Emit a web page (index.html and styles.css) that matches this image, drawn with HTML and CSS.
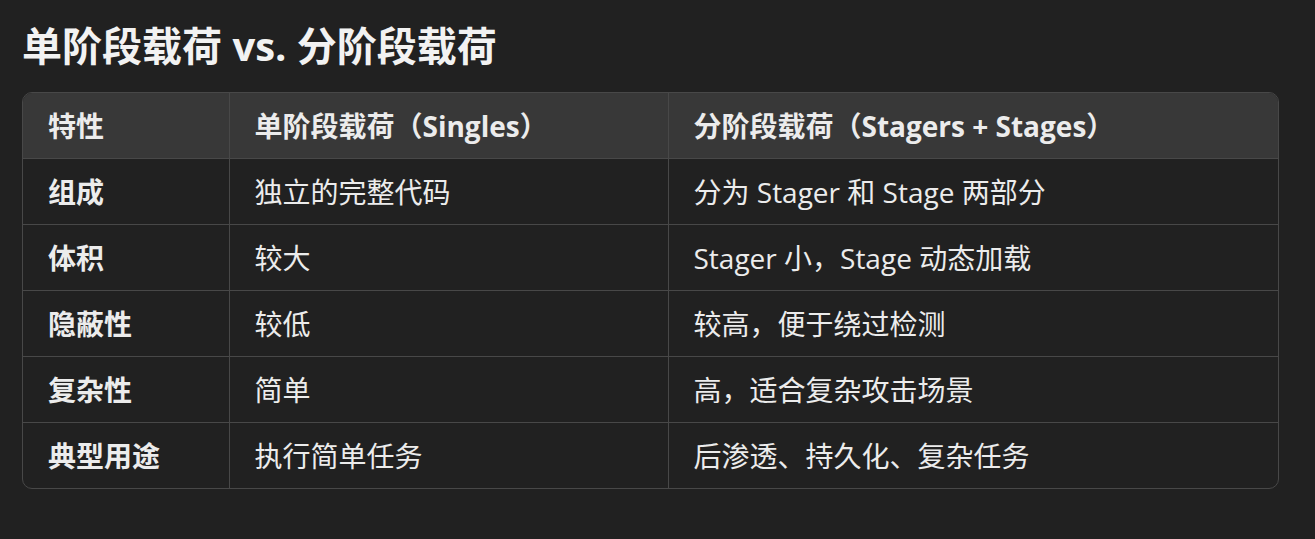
FILE: index.html
```html
<!DOCTYPE html>
<html lang="zh-CN">
<head>
<meta charset="utf-8">
<link rel="stylesheet" href="styles.css">
</head>
<body>
<div class="page">
  <h2 class="title">单阶段载荷 vs. 分阶段载荷</h2>
  <div class="table-wrap">
    <table class="grid">
      <colgroup>
        <col class="c1"><col class="c2"><col class="c3">
      </colgroup>
      <thead>
        <tr><th>特性</th><th>单阶段载荷（Singles）</th><th>分阶段载荷（Stagers + Stages）</th></tr>
      </thead>
      <tbody>
        <tr><td class="key">组成</td><td>独立的完整代码</td><td>分为 Stager 和 Stage 两部分</td></tr>
        <tr><td class="key">体积</td><td>较大</td><td>Stager 小，Stage 动态加载</td></tr>
        <tr><td class="key">隐蔽性</td><td>较低</td><td>较高，便于绕过检测</td></tr>
        <tr><td class="key">复杂性</td><td>简单</td><td>高，适合复杂攻击场景</td></tr>
        <tr><td class="key">典型用途</td><td>执行简单任务</td><td>后渗透、持久化、复杂任务</td></tr>
      </tbody>
    </table>
  </div>
</div>
</body>
</html>
```
FILE: styles.css
```css
html, body {
  margin: 0;
  background: #212121;
}
body {
  font-family: "Open Sans", "Noto Sans CJK SC", sans-serif;
  color: #ececec;
}
.page {
  padding: 19px 36px 0 22px;
}
.title {
  margin: 0;
  font-size: 40px;
  line-height: 54px;
  font-weight: 700;
  color: #f2f2f2;
}
.table-wrap {
  margin-top: 19px;
  width: 1257px;
  border: 1px solid #484848;
  border-radius: 10px;
  overflow: hidden;
  box-sizing: border-box;
}
.grid {
  width: 100%;
  border-collapse: collapse;
  table-layout: fixed;
  font-size: 28px;
}
.c1 { width: 206px; }
.c2 { width: 439px; }
th, td {
  text-align: left;
  padding: 0 0 0 25px;
  height: 65px;
  border-left: 1px solid #484848;
  border-top: 1px solid #484848;
  line-height: 36px;
  white-space: nowrap;
}
th:first-child, td:first-child { border-left: none; }
thead th {
  border-top: none;
  background: #383838;
  font-weight: 700;
}
td { font-weight: 400; }
td.key { font-weight: 700; }
```
